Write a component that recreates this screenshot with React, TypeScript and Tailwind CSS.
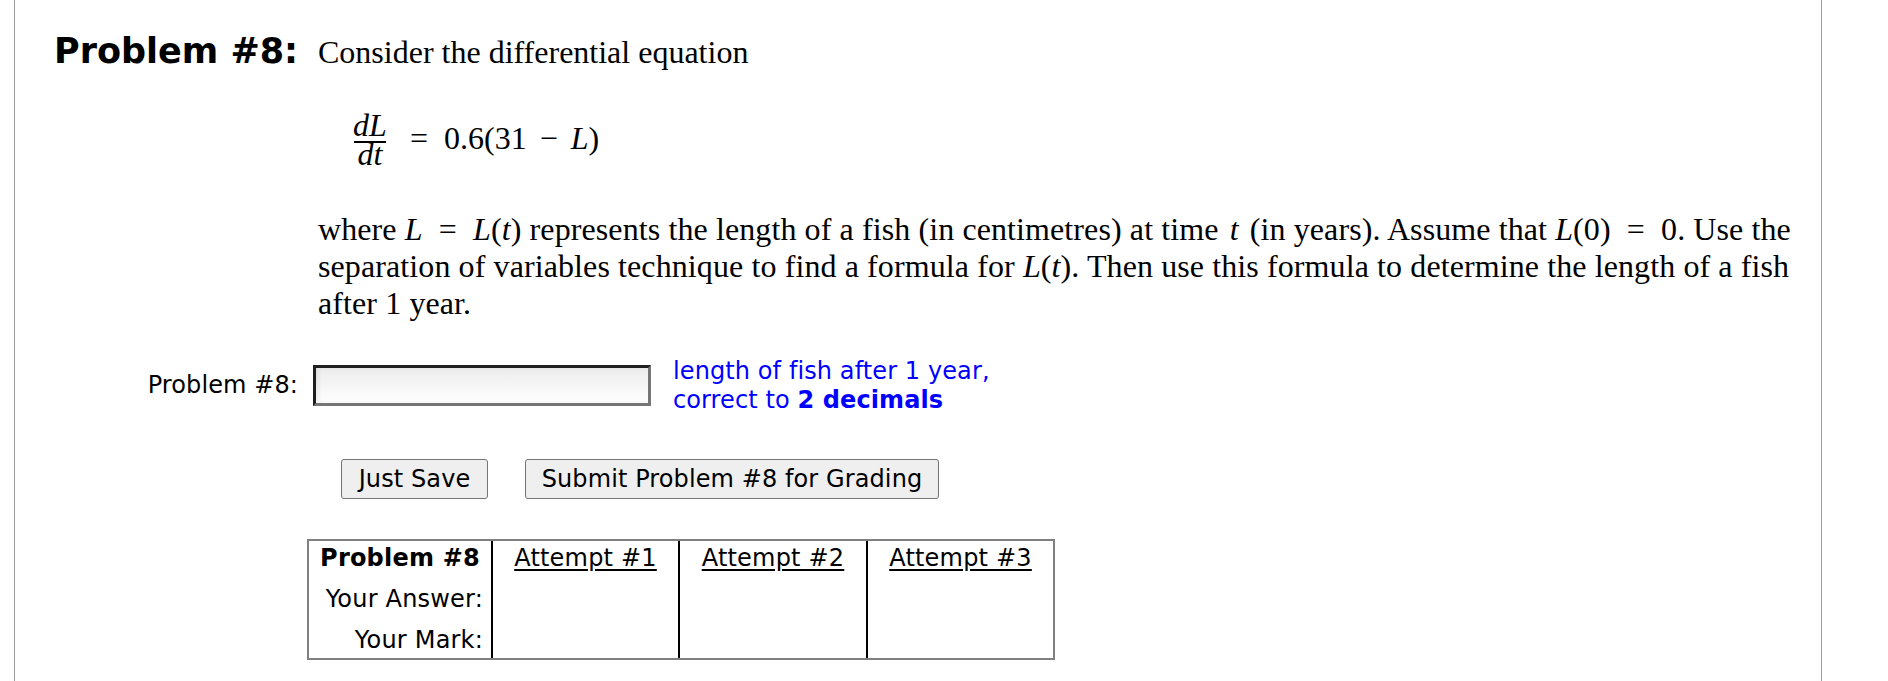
import React from 'react';

const sans = "font-['DejaVu_Sans',Verdana,sans-serif]";
const serif = "font-['Liberation_Serif','Times_New_Roman',serif]";

function M({ children, wide = false }: { children: React.ReactNode; wide?: boolean }) {
  return <i className={wide ? 'mx-[3px] italic' : 'italic'}>{children}</i>;
}

function Eq() {
  return <span className="mx-[8px]">=</span>;
}

function Fraction() {
  return (
    <div className="inline-flex w-[32px] flex-col items-center">
      <span className="block leading-[26px] italic">dL</span>
      <span className="mt-[3px] block h-[2px] w-full bg-black" />
      <span className="block leading-[22px] italic">dt</span>
    </div>
  );
}

export default function App() {
  return (
    <div className="min-h-[681px] overflow-hidden bg-white text-black">
      <div className="ml-[14px] min-h-[681px] w-[1808px] border-x border-[#9c9c9c]">
        {/* statement */}
        <div className="flex items-baseline pl-[39px] pt-[30px]">
          <h3 className={`${sans} w-[264px] shrink-0 text-[35px] font-bold leading-[42px]`}>Problem #8:</h3>
          <div className={`${serif} text-[32px] leading-[37px]`}>
            <p>Consider the differential equation</p>
            <div className="mt-[41px] flex items-center pl-[36px]">
              <Fraction />
              <span className="ml-[24px]">=</span>
              <span className="ml-[16px]">
                0.6(31<span className="mx-[5px]"> − </span>
                <M>L</M>)
              </span>
            </div>
            <p className="mt-[46px] whitespace-nowrap tracking-[0.1px]">
              where <M>L</M> <Eq /> <M>L</M>(<M>t</M>) represents the length of a fish (in centimetres) at time{' '}
              <M wide>t</M> (in years). Assume that <M>L</M>(0) <Eq /> 0. Use the
              <br />
              separation of variables technique to find a formula for <M>L</M>(<M>t</M>). Then use this formula to determine
              the length of a fish
              <br />
              after 1 year.
            </p>
          </div>
        </div>

        {/* answer box */}
        <div className={`${sans} mt-[35px] flex items-start text-[24px] leading-[29px] tracking-[0.1px]`}>
          <label className="mt-[14px] w-[283px] shrink-0 text-right">Problem #8:</label>
          <input
            type="text"
            className="ml-[15px] mt-[8px] h-[41px] w-[338px] border-[3px] border-b-[#767676] border-l-[#1f1f1f] border-r-[#767676] border-t-[#1f1f1f] bg-gradient-to-b from-[#ececec] to-white px-2 shadow-[inset_3px_0_4px_rgba(0,0,0,0.06)] outline-none"
          />
          <div className="ml-[22px] text-[#0000ff]">
            length of fish after 1 year,
            <br />
            correct to <b className="font-bold">2 decimals</b>
          </div>
        </div>

        {/* buttons */}
        <div className={`${sans} mt-[44px] flex pl-[326px] text-[24px] tracking-[0.1px]`}>
          <button className="h-[40px] w-[147px] rounded-[3px] border border-[#767676] bg-[#efefef] text-black">
            Just Save
          </button>
          <button className="ml-[37px] h-[40px] w-[414px] rounded-[3px] border border-[#767676] bg-[#efefef] text-black">
            Submit Problem #8 for Grading
          </button>
        </div>

        {/* attempts */}
        <div
          className={`${sans} ml-[292px] mt-[40px] w-[748px] border-2 border-[#808080] text-[24px] leading-[29px] tracking-[0.2px]`}
        >
          <div className="grid grid-cols-[184px_187px_188px_185px] divide-x-2 divide-black">
            <div className="flex flex-col gap-[12px] py-[3px] pr-[8px]">
              <span className="pl-[8px] text-center font-bold">Problem #8</span>
              <span className="text-right">Your Answer:</span>
              <span className="text-right">Your Mark:</span>
            </div>
            {['Attempt #1', 'Attempt #2', 'Attempt #3'].map((a) => (
              <div key={a} className="py-[3px] text-center">
                <a className="underline underline-offset-[3px]" href="#">
                  {a}
                </a>
              </div>
            ))}
          </div>
        </div>
      </div>
    </div>
  );
}
